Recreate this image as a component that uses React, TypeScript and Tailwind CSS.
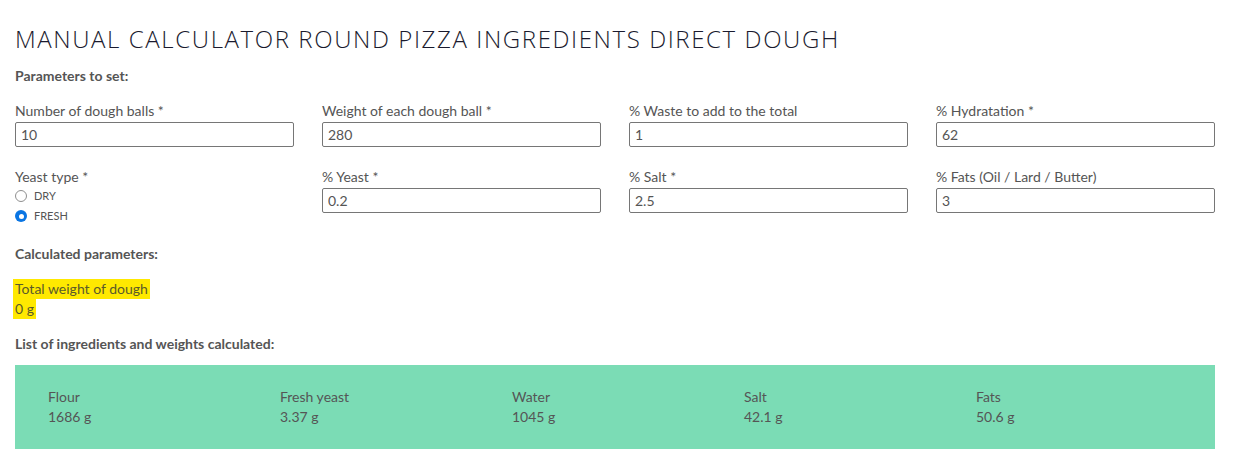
import { useState } from 'react'

const rowOne = [
  { label: 'Number of dough balls *', value: '10' },
  { label: 'Weight of each dough ball *', value: '280' },
  { label: '% Waste to add to the total', value: '1' },
  { label: '% Hydratation *', value: '62' },
]

const rowTwo = [
  { label: '% Yeast *', value: '0.2' },
  { label: '% Salt *', value: '2.5' },
  { label: '% Fats (Oil / Lard / Butter)', value: '3' },
]

const ingredients = [
  { name: 'Flour', weight: '1686 g' },
  { name: 'Fresh yeast', weight: '3.37 g' },
  { name: 'Water', weight: '1045 g' },
  { name: 'Salt', weight: '42.1 g' },
  { name: 'Fats', weight: '50.6 g' },
]

function Field({ label, value }: { label: string; value: string }) {
  const [v, setV] = useState(value)
  return (
    <div className="flex flex-col">
      <label className="text-[14px] leading-[18px] text-[#555]">{label}</label>
      <input
        value={v}
        onChange={(e) => setV(e.target.value)}
        className="mt-[2px] h-[25px] w-full rounded-[2px] border border-[#767676] px-[5px] text-[14px] text-[#555] focus:outline-none"
      />
    </div>
  )
}

export default function App() {
  const [yeast, setYeast] = useState('fresh')

  return (
    <div className="min-h-[459px] bg-white px-[15px] pt-[25px] font-['Lato','Open_Sans',sans-serif] text-[#555]">
      <h1 className="font-['Open_Sans',sans-serif] text-[24px] leading-[28px] font-light tracking-[1.6px] text-[#1a1a2e]">
        MANUAL CALCULATOR ROUND PIZZA INGREDIENTS DIRECT DOUGH
      </h1>

      <div className="w-[1200px]">
        <p className="mt-[14px] text-[14px] leading-[18px] font-bold">Parameters to set:</p>

        <div className="mt-[17px] grid grid-cols-4 gap-x-[28px]">
          {rowOne.map((f) => (
            <Field key={f.label} {...f} />
          ))}
        </div>

        <div className="mt-[21px] grid grid-cols-4 gap-x-[28px]">
          <div className="flex flex-col">
            <span className="text-[14px] leading-[18px]">Yeast type *</span>
            {[
              { id: 'dry', label: 'DRY' },
              { id: 'fresh', label: 'FRESH' },
            ].map((o) => (
              <label key={o.id} className="flex h-[20px] items-center gap-[7px] text-[11px] leading-[14px]">
                <button
                  type="button"
                  onClick={() => setYeast(o.id)}
                  className={
                    yeast === o.id
                      ? 'flex h-[12px] w-[12px] items-center justify-center rounded-full bg-[#0a75e3]'
                      : 'h-[12px] w-[12px] rounded-full border border-[#8f8f8f] bg-white'
                  }
                >
                  {yeast === o.id && <span className="h-[5px] w-[5px] rounded-full bg-white" />}
                </button>
                {o.label}
              </label>
            ))}
          </div>
          {rowTwo.map((f) => (
            <Field key={f.label} {...f} />
          ))}
        </div>

        <p className="mt-[19px] text-[14px] leading-[18px] font-bold">Calculated parameters:</p>

        <div className="mt-[16px] flex flex-col items-start text-[14px] leading-[20px]">
          <span className="bg-[#ffe900] px-[2px] -ml-[2px] text-[#5a5a2a]">Total weight of dough</span>
          <span className="bg-[#ffe900] px-[2px] -ml-[2px] text-[#5a5a2a]">0 g</span>
        </div>

        <p className="mt-[16px] text-[14px] leading-[18px] font-bold">List of ingredients and weights calculated:</p>

        <div className="mt-[12px] flex h-[84px] items-center bg-[#7bdcb5] pl-[33px]">
          {ingredients.map((i) => (
            <div key={i.name} className="w-[232px] text-[14px] leading-[20px] text-[#555]">
              <div>{i.name}</div>
              <div>{i.weight}</div>
            </div>
          ))}
        </div>
      </div>
    </div>
  )
}
